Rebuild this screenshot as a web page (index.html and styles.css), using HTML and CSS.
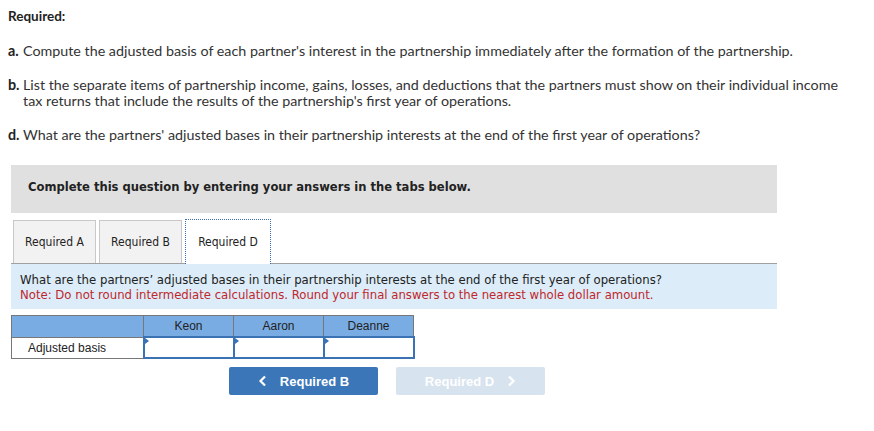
FILE: index.html
```html
<!DOCTYPE html>
<html>
<head>
<meta charset="utf-8">
<link rel="stylesheet" href="styles.css">
</head>
<body>
<div class="page">
  <p class="req-title">Required:</p>
  <p class="item"><b>a.</b><span>Compute the adjusted basis of each partner's interest in the partnership immediately after the formation of the partnership.</span></p>
  <p class="item"><b>b.</b><span>List the separate items of partnership income, gains, losses, and deductions that the partners must show on their individual income tax returns that include the results of the partnership's first year of operations.</span></p>
  <p class="item"><b>d.</b><span>What are the partners' adjusted bases in their partnership interests at the end of the first year of operations?</span></p>

  <div class="banner">Complete this question by entering your answers in the tabs below.</div>

  <div class="tabs">
    <div class="tab">Required A</div>
    <div class="tab">Required B</div>
    <div class="tab active">Required D</div>
  </div>
  <div class="info">
    <div>What are the partners’ adjusted bases in their partnership interests at the end of the first year of operations?</div>
    <div class="note">Note: Do not round intermediate calculations. Round your final answers to the nearest whole dollar amount.</div>
  </div>

  <table class="grid">
    <colgroup><col class="c0"><col class="c1"><col class="c1"><col class="c1"></colgroup>
    <tr class="head">
      <th></th><th>Keon</th><th>Aaron</th><th>Deanne</th>
    </tr>
    <tr>
      <td class="lbl">Adjusted basis</td>
      <td class="inp"></td><td class="inp"></td><td class="inp"></td>
    </tr>
  </table>

  <div class="nav">
    <div class="btn prev"><svg width="10" height="12" viewBox="0 0 10 12"><path d="M7 1.5 L2.5 6 L7 10.5" fill="none" stroke="#fff" stroke-width="2.2"/></svg>Required B</div>
    <div class="btn next">Required D<svg width="10" height="12" viewBox="0 0 10 12"><path d="M3 1.5 L7.5 6 L3 10.5" fill="none" stroke="#fff" stroke-width="2.2"/></svg></div>
  </div>
</div>
</body>
</html>
```
FILE: styles.css
```css
body { margin: 0; background: #fff; }
.page { padding: 8px 8px 0 8px; font-family: Lato, "Open Sans", sans-serif; color: #333; }
p { margin: 0; }
.req-title { font-weight: bold; font-size: 13.5px; line-height: 16px; color: #222; margin-bottom: 19px; }
.item { display: flex; width: 842px; font-size: 14.3px; line-height: 16px; color: #333; margin-bottom: 18px; }
.item b { width: 15px; flex: none; color: #222; }
.item:last-of-type { margin-bottom: 22px; }
.banner { margin: 0 0 0 3px; box-sizing: border-box; width: 766px; height: 48px; background: #e0e0e0; display: flex; align-items: center; padding: 0 0 6px 17px; font-family: "DejaVu Sans Condensed", "DejaVu Sans", sans-serif; font-weight: bold; font-size: 12.85px; color: #222; }
.tabs { display: flex; align-items: flex-end; gap: 2px; margin: 6px 0 0 5px; }
.tab { width: 83px; height: 43px; box-sizing: border-box; border: 1px solid #c8c8c8; border-bottom: none; background: #f2f2f2; display: flex; align-items: center; justify-content: center; font-family: "DejaVu Sans Condensed", "DejaVu Sans", sans-serif; font-size: 12px; color: #222; }
.tab + .tab { margin-left: 1px; }
.tab.active { width: 86px; height: 45px; margin-bottom: -1px; position: relative; background: #fff; border: 1px dotted #3a6fb5; border-bottom: none; }
.info { margin: 0 0 0 3px; box-sizing: border-box; width: 766px; border-top: 1px solid #a0a0a0; background: #dcecf8; padding: 8px 9px 7px 9px; font-family: "DejaVu Sans Condensed", "DejaVu Sans", sans-serif; font-size: 13px; line-height: 15px; color: #222; }
.info .note { color: #c0272d; }
.grid { margin: 6px 0 0 3px; border-collapse: collapse; table-layout: fixed; width: 402px; font-family: "Liberation Sans", Arial, sans-serif; font-size: 12px; color: #222; }
.grid col.c0 { width: 132px; }
.grid col.c1 { width: 90px; }
.grid th { background: #79ace3; border: 1px solid #777; height: 20px; font-weight: normal; padding: 0; }
.grid td { height: 19px; border: 1px solid #777; padding: 0; }
.grid td.lbl { padding-left: 16px; text-align: left; }
.grid td.inp { border: 2px solid #3a72b4; position: relative; }
.grid td.inp::before { content: ""; position: absolute; left: 0; top: 0; border-left: 4px solid #3a72b4; border-top: 3px solid transparent; border-bottom: 3px solid transparent; }
.nav { display: flex; gap: 18px; margin: 8px 0 0 221px; }
.btn { width: 149px; height: 28px; border-radius: 2px; display: flex; align-items: center; justify-content: center; gap: 12px; font-family: "Liberation Sans", Arial, sans-serif; font-weight: bold; font-size: 13px; color: #fff; }
.btn.prev { background: #3a76b8; }
.btn.next { background: #d8e3f0; }
```
